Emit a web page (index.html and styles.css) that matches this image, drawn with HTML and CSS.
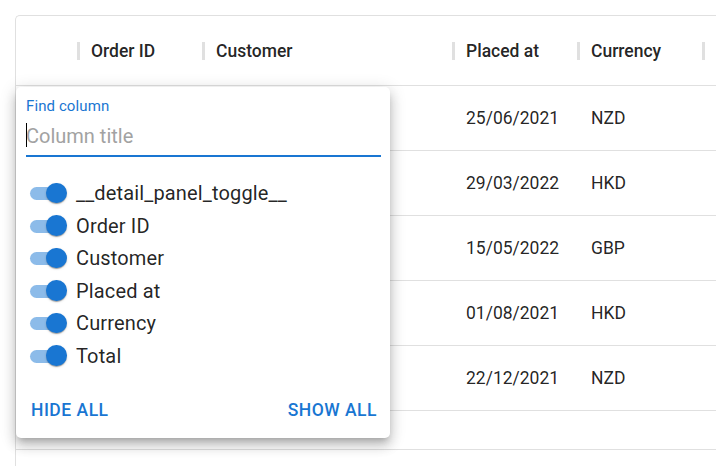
FILE: index.html
```html
<!DOCTYPE html>
<html lang="en">
<head>
<meta charset="utf-8">
<title>Data grid columns panel</title>
<link rel="stylesheet" href="styles.css">
</head>
<body>
<div class="grid">
  <div class="header">
    <div class="hcell c-toggle"><span class="sep"></span></div>
    <div class="hcell c-id"><span class="htitle">Order ID</span><span class="sep"></span></div>
    <div class="hcell c-cust"><span class="htitle">Customer</span><span class="sep"></span></div>
    <div class="hcell c-date"><span class="htitle">Placed at</span><span class="sep"></span></div>
    <div class="hcell c-cur"><span class="htitle">Currency</span><span class="sep"></span></div>
    <div class="hcell c-total"><span class="htitle">Total</span><span class="sep"></span></div>
  </div>
  <div class="row">
    <div class="cell c-toggle"></div><div class="cell c-id">1</div><div class="cell c-cust">Matheus</div>
    <div class="cell c-date">25/06/2021</div><div class="cell c-cur">NZD</div><div class="cell c-total">$1,230.00</div>
  </div>
  <div class="row">
    <div class="cell c-toggle"></div><div class="cell c-id">2</div><div class="cell c-cust">Olivier</div>
    <div class="cell c-date">29/03/2022</div><div class="cell c-cur">HKD</div><div class="cell c-total">$870.00</div>
  </div>
  <div class="row">
    <div class="cell c-toggle"></div><div class="cell c-id">3</div><div class="cell c-cust">Flavien</div>
    <div class="cell c-date">15/05/2022</div><div class="cell c-cur">GBP</div><div class="cell c-total">$410.00</div>
  </div>
  <div class="row">
    <div class="cell c-toggle"></div><div class="cell c-id">4</div><div class="cell c-cust">Danail</div>
    <div class="cell c-date">01/08/2021</div><div class="cell c-cur">HKD</div><div class="cell c-total">$2,100.00</div>
  </div>
  <div class="row">
    <div class="cell c-toggle"></div><div class="cell c-id">5</div><div class="cell c-cust">Alexandre</div>
    <div class="cell c-date">22/12/2021</div><div class="cell c-cur">NZD</div><div class="cell c-total">$640.00</div>
  </div>
  <div class="row-filler"></div>
</div>

<div class="panel">
  <div class="panel-header">
    <label class="find-label" for="find">Find column</label>
    <div class="input-wrap">
      <span class="caret"></span>
      <input id="find" class="find-input" type="text" placeholder="Column title">
    </div>
  </div>
  <div class="panel-content">
    <div class="col-row"><span class="switch"><span class="track"></span><span class="thumb"></span></span><span class="col-label">__detail_panel_toggle__</span></div>
    <div class="col-row"><span class="switch"><span class="track"></span><span class="thumb"></span></span><span class="col-label">Order ID</span></div>
    <div class="col-row"><span class="switch"><span class="track"></span><span class="thumb"></span></span><span class="col-label">Customer</span></div>
    <div class="col-row"><span class="switch"><span class="track"></span><span class="thumb"></span></span><span class="col-label">Placed at</span></div>
    <div class="col-row"><span class="switch"><span class="track"></span><span class="thumb"></span></span><span class="col-label">Currency</span></div>
    <div class="col-row"><span class="switch"><span class="track"></span><span class="thumb"></span></span><span class="col-label">Total</span></div>
  </div>
  <div class="panel-footer">
    <button class="text-btn" type="button">Hide all</button>
    <button class="text-btn" type="button">Show all</button>
  </div>
</div>
</body>
</html>
```

FILE: styles.css
```css
html, body {
  margin: 0;
  padding: 0;
  overflow: hidden;
  background: #fff;
}
body {
  width: 716px;
  height: 466px;
  font-family: Roboto, "Liberation Sans", sans-serif;
  color: rgba(0, 0, 0, 0.87);
  position: relative;
  padding: 15px 0 0 15px;
  box-sizing: border-box;
}

/* ---------- grid ---------- */
.grid {
  width: 701px;
  height: 451px;
  border: 1px solid #e0e0e0;
  border-right: 0;
  border-bottom: 0;
  border-top-left-radius: 5px;
  box-sizing: border-box;
  overflow: hidden;
}
.header {
  display: flex;
  height: 70px;
  border-bottom: 1px solid #e0e0e0;
  box-sizing: border-box;
}
.hcell {
  position: relative;
  display: flex;
  align-items: center;
  padding: 0 12.5px;
  box-sizing: border-box;
  font-size: 17.5px;
  font-weight: 500;
  white-space: nowrap;
}
.sep {
  position: absolute;
  right: -1.25px;
  top: 26px;
  width: 2.5px;
  height: 17.5px;
  background: #e0e0e0;
  z-index: 1;
}
.c-toggle { width: 62.5px; flex: none; }
.c-id { width: 125px; flex: none; }
.c-cust { width: 250px; flex: none; }
.c-date { width: 125px; flex: none; }
.c-cur { width: 125px; flex: none; }
.c-total { width: 125px; flex: none; }

.row {
  display: flex;
  height: 65px;
  border-bottom: 1px solid #e0e0e0;
  box-sizing: border-box;
}
.cell {
  display: flex;
  align-items: center;
  padding: 0 12.5px;
  box-sizing: border-box;
  font-size: 17.5px;
  white-space: nowrap;
  overflow: hidden;
}
.row-filler {
  height: 38px;
  border-bottom: 1px solid #e0e0e0;
}

/* ---------- columns panel ---------- */
.panel {
  position: absolute;
  left: 16px;
  top: 87px;
  width: 374px;
  background: #fff;
  border-radius: 5px;
  box-shadow: 0 5px 6px -3px rgba(0,0,0,0.2), 0 8px 12px 1px rgba(0,0,0,0.14), 0 3px 16px 2px rgba(0,0,0,0.12);
  z-index: 10;
}
.panel-header {
  padding: 9px 9px 10px 10px;
  display: flex;
  flex-direction: column;
}
.find-label {
  font-size: 15px;
  line-height: 20px;
  color: #1976d2;
  letter-spacing: 0.1px;
}
.input-wrap {
  position: relative;
  margin-top: 1px;
  height: 40px;
  box-sizing: border-box;
  padding: 5px 0 6.25px;
  border-bottom: 2px solid #1976d2;
  display: flex;
}
.caret {
  position: absolute;
  left: 0;
  top: 6px;
  width: 1px;
  height: 24px;
  background: #000;
}
.find-input {
  border: 0;
  outline: 0;
  padding: 0;
  margin: 0;
  width: 100%;
  height: 28px;
  font-family: Roboto, "Liberation Sans", sans-serif;
  font-size: 20px;
  color: rgba(0, 0, 0, 0.87);
  caret-color: transparent;
  background: transparent;
}
.find-input::placeholder {
  color: #a2a2a2;
  opacity: 1;
}

.panel-content {
  padding: 10px 0;
  display: flex;
  flex-direction: column;
}
.col-row {
  display: flex;
  align-items: center;
  height: 32.5px;
  padding-left: 14px;
}
.switch {
  position: relative;
  width: 37px;
  height: 30px;
  flex: none;
}
.track {
  position: absolute;
  left: 0;
  top: 8.75px;
  width: 34px;
  height: 13px;
  border-radius: 7px;
  background: #8cbbe9;
}
.thumb {
  position: absolute;
  left: 16px;
  top: 4.5px;
  width: 20.5px;
  height: 20.5px;
  border-radius: 50%;
  background: #1976d2;
  box-shadow: 0 2px 1px -1px rgba(0,0,0,0.2), 0 1px 1px 0 rgba(0,0,0,0.14), 0 1px 3px 0 rgba(0,0,0,0.12);
}
.col-label {
  margin-left: 9px;
  font-size: 20px;
  line-height: 1.5;
  color: rgba(0, 0, 0, 0.87);
  letter-spacing: 0.15px;
}

.panel-footer {
  display: flex;
  justify-content: space-between;
  padding: 5px 3px 5px 5px;
}
.text-btn {
  border: 0;
  background: transparent;
  font-family: Roboto, "Liberation Sans", sans-serif;
  font-weight: 500;
  font-size: 17.5px;
  line-height: 30.5px;
  letter-spacing: 0.5px;
  text-transform: uppercase;
  color: #1976d2;
  padding: 7.5px 10px;
  margin: 0;
  cursor: pointer;
}
```
